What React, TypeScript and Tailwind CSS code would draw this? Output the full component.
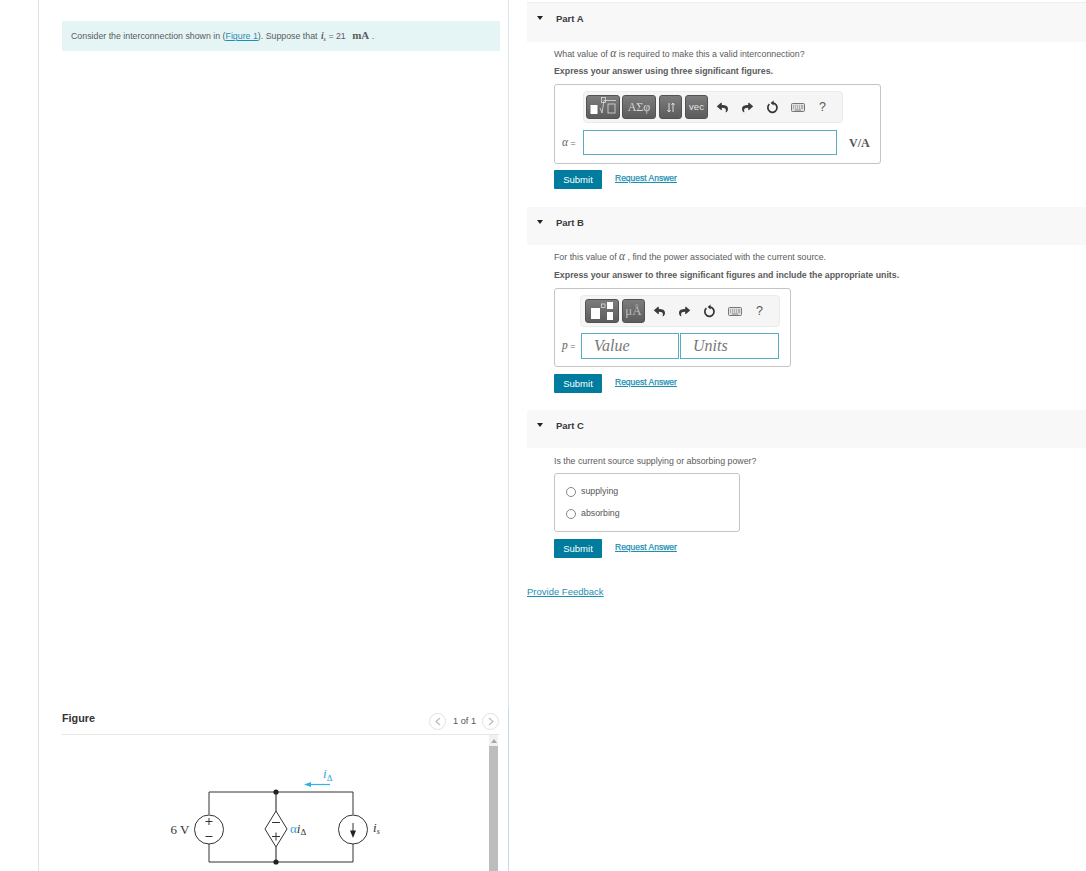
import type { ReactNode } from "react";
import { FaReply, FaShare } from "react-icons/fa";

const Var = ({ children }: { children: ReactNode }) => (
  <span className="font-['Liberation_Serif',serif] text-[11.5px] italic">{children}</span>
);

const KeyboardIcon = () => (
  <svg width="14" height="9" viewBox="0 0 14 9">
    <rect x="0.5" y="0.5" width="13" height="8" rx="1" fill="#dedede" stroke="#777" />
    <path d="M2 3h1M4 3h1M6 3h1M8 3h1M10 3h2M2 5h1M4 5h1M6 5h1M8 5h1M10 5h2M4 7h6" stroke="#777" strokeWidth="0.9" />
  </svg>
);

const RefreshIcon = () => (
  <svg width="13" height="14" viewBox="0 0 13 14" fill="none">
    <path d="M3.4 4.2A4.6 4.6 0 1 0 7 3.1" stroke="#333" strokeWidth="1.7" />
    <path d="M7.6 0.4V5.6L4.6 3Z" fill="#333" />
  </svg>
);

const ToolIcons = () => (
  <div className="ml-[2px] flex items-center text-[#3c3c3c]">
    <div className="flex w-[25px] justify-center">
      <FaReply size={11} />
    </div>
    <div className="flex w-[25px] justify-center">
      <FaShare size={11} />
    </div>
    <div className="flex w-[25px] justify-center">
      <RefreshIcon />
    </div>
    <div className="flex w-[25px] justify-center">
      <KeyboardIcon />
    </div>
    <div className="flex w-[25px] justify-center text-[12.5px] text-[#555]">?</div>
  </div>
);

const ToolButton = ({ width, className, children }: { width: string; className?: string; children: ReactNode }) => (
  <div
    className={`flex h-[24px] items-center justify-center rounded-[3px] border border-[#525252] bg-gradient-to-b from-[#7c7c7c] to-[#5c5c5c] ${width} ${className ?? ""}`}
  >
    {children}
  </div>
);

const Toolbar = ({ className, children }: { className: string; children: ReactNode }) => (
  <div className={`flex h-[32px] items-center rounded-[4px] border border-[#ebebeb] bg-[#f5f5f5] ${className}`}>
    {children}
  </div>
);

const SubmitRow = ({ className }: { className: string }) => (
  <div className={`flex items-center ${className}`}>
    <div className="flex h-[19px] w-[48px] items-center justify-center rounded-[1px] bg-[#007c9e] pt-[1px] text-[9.5px] text-white">
      Submit
    </div>
    <a className="-mt-[2px] ml-[13px] text-[8.5px] leading-none text-[#1c8fb2] underline [-webkit-text-stroke:0.25px_#1c8fb2]">
      Request Answer
    </a>
  </div>
);

const Part = ({
  title,
  className,
  bandHeight,
  children,
}: {
  title: string;
  className?: string;
  bandHeight: string;
  children: ReactNode;
}) => (
  <section className={className}>
    <div className={`flex items-start bg-[#f8f8f8] pt-[10px] pl-[10px] ${bandHeight}`}>
      <div className="mt-[3px] h-0 w-0 border-x-[3.5px] border-t-[4px] border-x-transparent border-t-[#222]" />
      <span className="ml-[13px] text-[9.5px] leading-[11px] font-bold text-[#3a3a3a]">{title}</span>
    </div>
    <div className="pl-[27px]">{children}</div>
  </section>
);

const Radio = ({ label }: { label: string }) => (
  <div className="flex h-[22px] items-center">
    <div className="h-[10px] w-[10px] rounded-full border border-[#888] bg-white" />
    <span className="ml-[5px] text-[8.8px] text-[#555]">{label}</span>
  </div>
);

const Circuit = () => (
  <svg width="240" height="111" viewBox="150 760 240 111" className="block">
    <g fill="none" stroke="#333" strokeWidth="1">
      <path d="M209 814.5V792H353V814.5M353 844V862H209V844" />
      <circle cx="209" cy="829.5" r="14.5" />
      <circle cx="353" cy="829.5" r="14.5" />
      <path d="M276 811L287 829L276 847L265 829Z" />
      <path d="M272 822.5H280M272 836.5H280M276 832.5V840.5M205.5 821.5H212.5M209 818V825M205.5 836.5H212.5" />
      <path d="M353 823V832" />
    </g>
    <path d="M276 792V811M276 847V862" stroke="#666" strokeWidth="1.5" />
    <path d="M350 830.5L353 838L356 830.5Z" fill="#222" />
    <circle cx="276" cy="792" r="2.6" fill="#222" />
    <circle cx="276" cy="862" r="2.6" fill="#222" />
    <path d="M310 784.5H330" stroke="#35aee0" strokeWidth="1.2" />
    <path d="M304 784.5L311 782V787Z" fill="#35aee0" />
    <g fontFamily="'Liberation Serif',serif" fontSize="13">
      <text x="170.5" y="833.5" fill="#333">6 V</text>
      <text x="290" y="832.5" fill="#2aa5d8">
        α<tspan fontStyle="italic" fill="#333">i</tspan>
        <tspan fill="#333" fontSize="9" dy="2">Δ</tspan>
      </text>
      <text x="323" y="778" fill="#2aa5d8" fontStyle="italic">
        i<tspan fontStyle="normal" fontSize="9" dy="3">Δ</tspan>
      </text>
      <text x="373" y="832" fill="#333" fontStyle="italic">
        i<tspan fontSize="8" dy="2">s</tspan>
      </text>
    </g>
  </svg>
);

export default function App() {
  return (
    <div className="flex h-[871px] w-[1086px] overflow-hidden bg-white font-['Liberation_Sans',Arial,sans-serif] text-[8.8px] text-[#5b5b5b]">
      <div className="w-[39px] shrink-0 border-r border-[#e2e2e2]" />

      <div className="flex w-[470px] shrink-0 flex-col">
        <div className="h-[708px] border-r border-[#dfe4ec] pt-[21px] pr-[8px] pl-[23px]">
          <div className="flex h-[30px] items-center bg-[#e5f5f6] pb-[1px] pl-[9px]">
            <span>
              Consider the interconnection shown in (<a className="text-[#1c8fb2] underline">Figure 1</a>). Suppose that{" "}
              <span className="ml-[1px] font-['Liberation_Serif',serif] text-[9.5px] font-bold italic">
                i<sub className="text-[6px]">s</sub>
              </span>{" "}
              = 21{" "}
              <span className="ml-[4px] font-['Liberation_Serif',serif] text-[11px] font-bold">mA</span> .
            </span>
          </div>
        </div>

        <div className="flex-1 border-r border-[#c5d8ee] pr-[8px] pl-[23px]">
          <div className="flex h-[27px] items-center justify-between border-b border-[#e6e6e6]">
            <span className="-mt-[5px] text-[10.8px] font-bold text-[#333]">Figure</span>
            <div className="flex items-center">
              <div className="flex h-[17px] w-[17px] items-center justify-center rounded-full border border-[#e2e2e2]">
                <svg width="6" height="9" viewBox="0 0 6 9" fill="none" stroke="#bbb" strokeWidth="1.2">
                  <path d="M5 1L1 4.5L5 8" />
                </svg>
              </div>
              <span className="mt-[1px] mr-[6px] ml-[7px] text-[9.2px] text-[#555]">1 of 1</span>
              <div className="mr-[1px] flex h-[17px] w-[17px] items-center justify-center rounded-full border border-[#e2e2e2]">
                <svg width="6" height="9" viewBox="0 0 6 9" fill="none" stroke="#bbb" strokeWidth="1.2">
                  <path d="M1 1L5 4.5L1 8" />
                </svg>
              </div>
            </div>
          </div>
          <div className="flex h-[136px] pr-[2px]">
            <div className="flex-1 pt-[25px] pl-[88px]">
              <Circuit />
            </div>
            <div className="w-[9px] bg-[#f1f1f1]">
              <div className="flex h-[11px] items-center justify-center">
                <div className="h-0 w-0 border-x-[3px] border-b-[4px] border-x-transparent border-b-[#a8a8a8]" />
              </div>
              <div className="h-[125px] bg-[#bdbdbd]" />
            </div>
          </div>
        </div>
      </div>

      <div className="ml-[18px] min-w-0 flex-1 pt-[2px]">
        <Part title="Part A" bandHeight="h-[39px]" className="border-t border-[#eeeeee]">
          <p className="mt-[6px] leading-[11px]">
            What value of <Var>α</Var> is required to make this a valid interconnection?
          </p>
          <p className="mt-[6px] leading-[11px] font-bold">Express your answer using three significant figures.</p>
          <div className="mt-[7px] h-[80px] w-[327px] rounded-[3px] border border-[#c4c4c4] pt-[6px] pl-[7px]">
            <Toolbar className="ml-[21px] w-[260px] pl-[2px]">
              <ToolButton width="w-[34px]">
                <svg width="32" height="22" viewBox="0 0 32 22" fill="none">
                  <rect x="3.5" y="9" width="7" height="9" fill="#fff" />
                  <path d="M13 12L15 17L17 4.5H29" stroke="#ddd" strokeWidth="0.8" />
                  <rect x="14.5" y="1.5" width="4" height="5" stroke="#ddd" strokeWidth="0.8" />
                  <rect x="21" y="8" width="7" height="9" stroke="#ddd" strokeWidth="0.8" />
                </svg>
              </ToolButton>
              <ToolButton width="w-[34px]" className="ml-[2px] font-['Liberation_Serif',serif] text-[12px] text-[#d8d8d8]">
                ΑΣφ
              </ToolButton>
              <ToolButton width="w-[23px]" className="ml-[3px]">
                <svg width="10" height="11" viewBox="0 0 10 11" fill="none" stroke="#ddd" strokeWidth="1">
                  <path d="M3 1V10M1.5 8L3 10L4.5 8M7 10V1M5.5 3L7 1L8.5 3" />
                </svg>
              </ToolButton>
              <ToolButton width="w-[23px]" className="ml-[3px] text-[9.5px] text-[#e6e6e6]">
                vec
              </ToolButton>
              <ToolIcons />
            </Toolbar>
            <div className="mt-[7px] flex items-center">
              <span className="w-[21px] text-[#666]">
                <Var>α</Var> =
              </span>
              <div className="h-[25px] w-[254px] border border-[#57adc4] bg-white" />
              <span className="ml-[12px] font-['Liberation_Serif',serif] text-[12px] font-bold text-[#555]">V/A</span>
            </div>
          </div>
          <SubmitRow className="mt-[6px]" />
        </Part>

        <Part title="Part B" bandHeight="h-[38px]" className="mt-[18px]">
          <p className="mt-[6px] leading-[11px]">
            For this value of <Var>α</Var> , find the power associated with the current source.
          </p>
          <p className="mt-[7px] leading-[11px] font-bold">
            Express your answer to three significant figures and include the appropriate units.
          </p>
          <div className="mt-[7px] h-[79px] w-[237px] rounded-[3px] border border-[#c4c4c4] pt-[6px] pl-[7px]">
            <Toolbar className="ml-[18px] w-[200px] pl-[4px]">
              <ToolButton width="w-[34px]">
                <svg width="32" height="22" viewBox="0 0 32 22" fill="none">
                  <rect x="5" y="8" width="9" height="11" fill="#fff" />
                  <rect x="15.5" y="4" width="3.5" height="3.5" stroke="#ddd" strokeWidth="0.8" />
                  <rect x="21" y="2" width="6" height="7" fill="#fff" />
                  <rect x="21" y="12" width="6" height="8" fill="#fff" />
                </svg>
              </ToolButton>
              <ToolButton width="w-[23px]" className="ml-[3px] font-['Liberation_Serif',serif] text-[13px] text-[#bdbdbd]">
                μÅ
              </ToolButton>
              <ToolIcons />
            </Toolbar>
            <div className="mt-[6px] flex items-center">
              <span className="w-[19px] text-[#666]">
                <Var>p</Var> =
              </span>
              <div className="flex h-[26px] w-[98px] items-center border border-[#57adc4] pl-[12px] font-['Liberation_Serif',serif] text-[16px] text-[#777] italic">
                Value
              </div>
              <div className="ml-[1px] flex h-[26px] w-[99px] items-center border border-[#57adc4] pl-[12px] font-['Liberation_Serif',serif] text-[16px] text-[#777] italic">
                Units
              </div>
            </div>
          </div>
          <SubmitRow className="mt-[7px]" />
        </Part>

        <Part title="Part C" bandHeight="h-[38px]" className="mt-[17px]">
          <p className="mt-[8px] leading-[11px]">Is the current source supplying or absorbing power?</p>
          <div className="mt-[6px] h-[59px] w-[186px] rounded-[3px] border border-[#c4c4c4] pt-[7px] pl-[11px]">
            <Radio label="supplying" />
            <Radio label="absorbing" />
          </div>
          <SubmitRow className="mt-[7px]" />
        </Part>

        <a className="mt-[28px] block text-[9.5px] leading-[12px] text-[#1c8fb2] underline">Provide Feedback</a>
      </div>
    </div>
  );
}
